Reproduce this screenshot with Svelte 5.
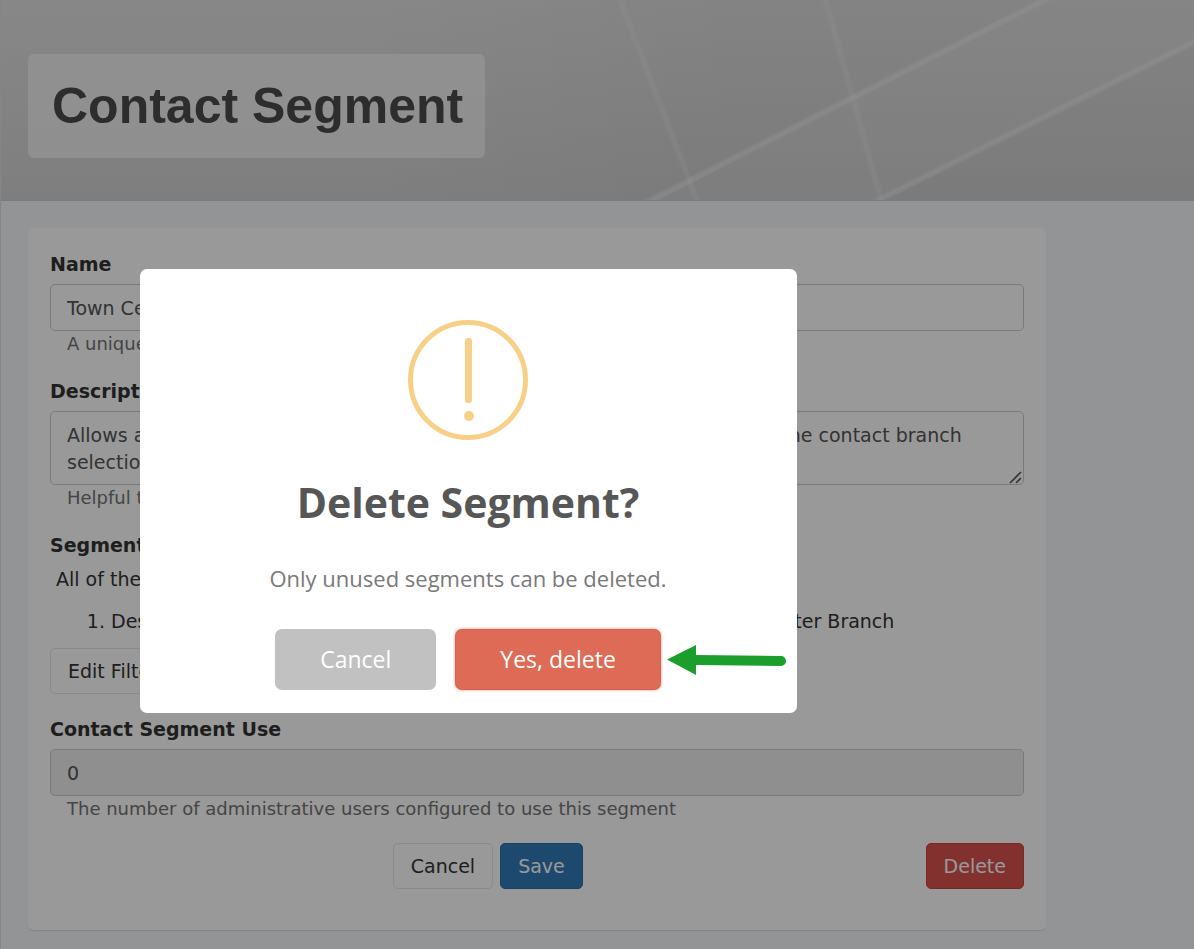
<script>
  let name = $state('Town Center Branch')
  let description = $state(
    'Allows administrative users to only see and update the contacts that have the contact branch selection of Town Center',
  )
  let uses = $state(0)
  let confirming = $state(true)

  const close = () => {
    confirming = false
  }
</script>

<div class="page">
  <header class="banner">
    <svg class="banner-art" viewBox="0 0 1194 200" preserveAspectRatio="none" aria-hidden="true">
      <defs>
        <linearGradient id="pane" x1="0" y1="0" x2="0" y2="1">
          <stop offset="0" stop-color="#e2e2e2" />
          <stop offset="1" stop-color="#d3d3d3" />
        </linearGradient>
        <linearGradient id="shade" x1="0" y1="0" x2="1" y2="0">
          <stop offset="0.3" stop-color="#000" stop-opacity="0" />
          <stop offset="0.6" stop-color="#000" stop-opacity="0.03" />
          <stop offset="1" stop-color="#000" stop-opacity="0.03" />
        </linearGradient>
      </defs>
      <rect width="1194" height="200" fill="url(#pane)" />
      <rect width="1194" height="200" fill="url(#shade)" />
      <path d="M651 200 1044 0H1194V42L879 200Z" fill="#fff" fill-opacity="0.1" />
      <g stroke="#fff">
        <path d="M618 -4 698 204M824 -4 882 204" stroke-width="7" stroke-opacity="0.1" />
        <path d="M618 -4 698 204M824 -4 882 204" stroke-width="4" stroke-opacity="0.1" />
        <path d="M643 204 1052 -4M871 204 1202 38" stroke-width="7" stroke-opacity="0.18" />
        <path d="M643 204 1052 -4M871 204 1202 38" stroke-width="4" stroke-opacity="0.2" />
      </g>
    </svg>
    <h1>Contact Segment</h1>
  </header>

  <main>
    <form class="card" onsubmit={(e) => e.preventDefault()}>
      <div class="field">
        <label for="name">Name</label>
        <input id="name" class="control" type="text" bind:value={name} />
        <p class="help">A unique name for the segment</p>
      </div>

      <div class="field">
        <label for="description">Description</label>
        <textarea id="description" class="control" rows="2" bind:value={description}></textarea>
        <p class="help">Helpful to explain the use</p>
      </div>

      <section class="field">
        <h2>Segment Filters</h2>
        <p class="match">All of the following:</p>
        <ol>
          <li>Designated Branch for the contact is linked to one of choices: Town Center Branch</li>
        </ol>
        <button type="button" class="btn">Edit Filters</button>
      </section>

      <div class="field">
        <label for="uses">Contact Segment Use</label>
        <input id="uses" class="control" type="text" value={uses} readonly />
        <p class="help">The number of administrative users configured to use this segment</p>
      </div>

      <div class="actions">
        <div class="main-actions">
          <button type="button" class="btn">Cancel</button>
          <button type="submit" class="btn primary">Save</button>
        </div>
        <button type="button" class="btn danger" onclick={() => (confirming = true)}>Delete</button>
      </div>
    </form>
  </main>
</div>

{#if confirming}
  <div class="overlay">
    <div class="dialog" role="alertdialog" aria-modal="true" aria-labelledby="dialog-title" aria-describedby="dialog-text">
      <svg class="warning" viewBox="0 0 120 120" aria-hidden="true">
        <circle cx="60" cy="60" r="57.5" fill="none" stroke="#f8cf86" stroke-width="5" />
        <rect x="57" y="18" width="7" height="65" rx="3" fill="#f8cf86" />
        <circle cx="61" cy="96" r="5" fill="#f8cf86" />
      </svg>
      <h2 id="dialog-title">Delete Segment?</h2>
      <p id="dialog-text">Only unused segments can be deleted.</p>
      <div class="dialog-actions">
        <button type="button" onclick={close}>Cancel</button>
        <div class="confirm">
          <button type="button" class="yes" onclick={close}>Yes, delete</button>
          <svg class="arrow" viewBox="0 0 119 30" aria-hidden="true">
            <path d="M0 14.5 29 0V10L114 11A5 5 0 0 1 114 21L29 20V30Z" fill="#1c9e2c" />
          </svg>
        </div>
      </div>
    </div>
  </div>
{/if}

<style>
  :global(body) {
    background: #f5f7fa;
  }

  .page {
    box-sizing: border-box;
    min-height: 100vh;
    border-left: 1px solid #dcdee0;
    color: #333;
    font: 19px/27px Verdana, 'DejaVu Sans', sans-serif;
  }

  .banner {
    position: relative;
    display: flex;
    padding: 54px 27px 42px;
    border-bottom: 1px solid #c9cdd0;
  }

  .banner-art {
    position: absolute;
    inset: 0;
    width: 100%;
    height: 100%;
  }

  h1 {
    position: relative;
    margin: 0;
    padding: 22px 22px 22px 24px;
    border-radius: 6px;
    background: rgba(255, 255, 255, 0.6);
    color: #4b4b4b;
    font: bold 50px/60px 'Liberation Sans', Arial, sans-serif;
  }

  main {
    padding: 27px 148px 18px 27px;
  }

  .card {
    padding: 23px 22px 19px;
    border-radius: 5px;
    background: #fff;
    box-shadow: 0 1px 1px rgba(0, 0, 0, 0.1);
  }

  .field {
    margin-bottom: 22px;
  }

  label,
  .field h2 {
    display: block;
    margin: 0 0 6px;
    font-size: 19px;
    font-weight: bold;
    line-height: 27px;
  }

  .control {
    display: block;
    box-sizing: border-box;
    width: 100%;
    margin: 0;
    padding: 10px 16px 8px;
    border: 1px solid #ccc;
    border-radius: 5px;
    background: #fff;
    color: #555;
    font: inherit;
  }

  input.control {
    height: 47px;
    padding: 9px 16px;
  }

  textarea {
    height: 74px;
    overflow: hidden;
    resize: vertical;
  }

  textarea::-webkit-resizer {
    background: url("data:image/svg+xml,%3Csvg xmlns='http://www.w3.org/2000/svg' width='15' height='15'%3E%3Cpath d='M2 14 13 3M8 14 13 9' stroke='%23555' stroke-width='1.6'/%3E%3C/svg%3E") no-repeat right bottom;
  }

  .control[readonly] {
    background: #eee;
  }

  .help {
    margin: 0;
    padding: 1px 17px 0;
    color: #737373;
    font-size: 18px;
    line-height: 24px;
  }

  .match {
    margin: 0;
    padding: 1px 6px 0;
  }

  ol {
    margin: 15px 0 13px;
    padding-left: 61px;
  }

  .btn {
    height: 46px;
    padding: 0 17px;
    border: 1px solid #e6e6e6;
    border-radius: 5px;
    background: #fff;
    color: #333;
    font: inherit;
  }

  .btn.primary {
    border-color: #2e6da4;
    background: #337ab7;
    color: #fff;
  }

  .btn.danger {
    border-color: #d43f3a;
    background: #d9534f;
    color: #fff;
  }

  .actions {
    display: flex;
    margin-bottom: 22px;
  }

  .main-actions {
    display: flex;
    flex: 1;
    justify-content: center;
    gap: 7px;
  }

  .overlay {
    position: fixed;
    inset: 0;
    display: flex;
    align-items: center;
    justify-content: center;
    padding: 33px 257px 0 0;
    background: rgba(0, 0, 0, 0.4);
    font-family: 'Open Sans', sans-serif;
  }

  .dialog {
    display: flex;
    flex-direction: column;
    align-items: center;
    box-sizing: border-box;
    width: 657px;
    padding: 51px 24px 23px 23px;
    border-radius: 7px;
    background: #fff;
  }

  .warning {
    width: 120px;
    height: 120px;
  }

  .dialog h2 {
    margin: 34px 0 33px;
    color: #575757;
    font-size: 41px;
    font-weight: bold;
    line-height: 56px;
  }

  .dialog p {
    margin: 0 0 36px;
    color: #797979;
    font-size: 22px;
    line-height: 30px;
  }

  .dialog-actions {
    display: flex;
    gap: 19px;
  }

  .dialog button {
    height: 61px;
    padding: 0 45px 2px;
    border: 0;
    border-radius: 7px;
    background: #c1c1c1;
    color: #fff;
    font: 23px/30px 'Open Sans', sans-serif;
  }

  .dialog .yes {
    background: #dd6b55;
    box-shadow: 0 0 3px rgba(221, 107, 85, 0.8), inset 0 0 0 1px rgba(0, 0, 0, 0.05);
  }

  .confirm {
    position: relative;
  }

  .arrow {
    position: absolute;
    top: 16px;
    left: calc(100% + 6px);
    width: 119px;
    height: 30px;
  }
</style>
